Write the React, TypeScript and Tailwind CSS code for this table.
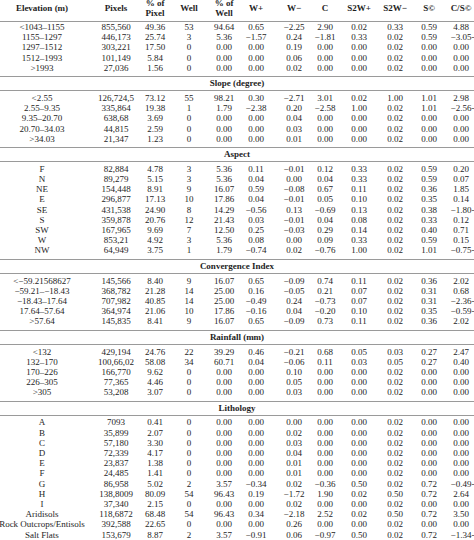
import React from "react";

const GRID =
  "grid grid-cols-[84px_64px_14px_54px_16px_48px_28px_34px_34px_38px_30px_34px]";

type Section = { title: string; rows: string[][] };

const sections: Section[] = [
  {
    title: "",
    rows: [
      ["<1043–1155", "855,560", "49.36", "53", "94.64", "0.65", "−2.25", "2.90", "0.02", "0.33", "0.59", "4.88"],
      ["1155–1297", "446,173", "25.74", "3", "5.36", "−1.57", "0.24", "−1.81", "0.33", "0.02", "0.59", "−3.05"],
      ["1297–1512", "303,221", "17.50", "0", "0.00", "0.00", "0.19", "0.00", "0.00", "0.02", "0.00", "0.00"],
      ["1512–1993", "101,149", "5.84", "0", "0.00", "0.00", "0.06", "0.00", "0.00", "0.02", "0.00", "0.00"],
      [">1993", "27,036", "1.56", "0", "0.00", "0.00", "0.02", "0.00", "0.00", "0.02", "0.00", "0.00"],
    ],
  },
  {
    title: "Slope (degree)",
    rows: [
      ["<2.55", "126,724,5", "73.12", "55", "98.21", "0.30", "−2.71", "3.01", "0.02", "1.00", "1.01", "2.98"],
      ["2.55–9.35", "335,864", "19.38", "1", "1.79", "−2.38", "0.20", "−2.58", "1.00", "0.02", "1.01", "−2.56"],
      ["9.35–20.70", "638,68", "3.69", "0", "0.00", "0.00", "0.04", "0.00", "0.00", "0.02", "0.00", "0.00"],
      ["20.70–34.03", "44,815", "2.59", "0", "0.00", "0.00", "0.03", "0.00", "0.00", "0.02", "0.00", "0.00"],
      [">34.03", "21,347", "1.23", "0", "0.00", "0.00", "0.01", "0.00", "0.00", "0.02", "0.00", "0.00"],
    ],
  },
  {
    title: "Aspect",
    rows: [
      ["F", "82,884", "4.78", "3", "5.36", "0.11", "−0.01", "0.12", "0.33", "0.02", "0.59", "0.20"],
      ["N", "89,279", "5.15", "3", "5.36", "0.04", "0.00", "0.04", "0.33", "0.02", "0.59", "0.07"],
      ["NE", "154,448", "8.91", "9", "16.07", "0.59", "−0.08", "0.67", "0.11", "0.02", "0.36", "1.85"],
      ["E", "296,877", "17.13", "10", "17.86", "0.04", "−0.01", "0.05", "0.10", "0.02", "0.35", "0.14"],
      ["SE", "431,538", "24.90", "8", "14.29", "−0.56", "0.13", "−0.69", "0.13", "0.02", "0.38", "−1.80"],
      ["S", "359,878", "20.76", "12", "21.43", "0.03", "−0.01", "0.04", "0.08", "0.02", "0.33", "0.12"],
      ["SW", "167,965", "9.69", "7", "12.50", "0.25", "−0.03", "0.29", "0.14", "0.02", "0.40", "0.71"],
      ["W", "853,21", "4.92", "3", "5.36", "0.08", "0.00", "0.09", "0.33", "0.02", "0.59", "0.15"],
      ["NW", "64,949", "3.75", "1", "1.79", "−0.74", "0.02", "−0.76", "1.00", "0.02", "1.01", "−0.75"],
    ],
  },
  {
    title: "Convergence Index",
    rows: [
      ["<−59.21568627", "145,566", "8.40", "9", "16.07", "0.65", "−0.09", "0.74", "0.11", "0.02", "0.36", "2.02"],
      ["−59.21–−18.43", "368,782", "21.28", "14", "25.00", "0.16", "−0.05", "0.21", "0.07", "0.02", "0.31", "0.68"],
      ["−18.43–17.64", "707,982", "40.85", "14", "25.00", "−0.49", "0.24", "−0.73", "0.07", "0.02", "0.31", "−2.36"],
      ["17.64–57.64", "364,974", "21.06", "10", "17.86", "−0.16", "0.04", "−0.20", "0.10", "0.02", "0.35", "−0.59"],
      [">57.64", "145,835", "8.41", "9", "16.07", "0.65", "−0.09", "0.73", "0.11", "0.02", "0.36", "2.02"],
    ],
  },
  {
    title: "Rainfall (mm)",
    rows: [
      ["<132", "429,194", "24.76", "22", "39.29", "0.46", "−0.21", "0.68", "0.05", "0.03", "0.27", "2.47"],
      ["132–170", "100,66,02", "58.08", "34", "60.71", "0.04", "−0.06", "0.11", "0.03", "0.05", "0.27", "0.40"],
      ["170–226", "166,770", "9.62", "0", "0.00", "0.00", "0.10", "0.00", "0.00", "0.02", "0.00", "0.00"],
      ["226–305", "77,365", "4.46", "0", "0.00", "0.00", "0.05", "0.00", "0.00", "0.02", "0.00", "0.00"],
      [">305", "53,208", "3.07", "0", "0.00", "0.00", "0.03", "0.00", "0.00", "0.02", "0.00", "0.00"],
    ],
  },
  {
    title: "Lithology",
    rows: [
      ["A", "7093", "0.41", "0", "0.00", "0.00", "0.00", "0.00", "0.00", "0.02", "0.00", "0.00"],
      ["B", "35,899", "2.07", "0", "0.00", "0.00", "0.02", "0.00", "0.00", "0.02", "0.00", "0.00"],
      ["C", "57,180", "3.30", "0", "0.00", "0.00", "0.03", "0.00", "0.00", "0.02", "0.00", "0.00"],
      ["D", "72,339", "4.17", "0", "0.00", "0.00", "0.04", "0.00", "0.00", "0.02", "0.00", "0.00"],
      ["E", "23,837", "1.38", "0", "0.00", "0.00", "0.01", "0.00", "0.00", "0.02", "0.00", "0.00"],
      ["F", "24,485", "1.41", "0", "0.00", "0.00", "0.01", "0.00", "0.00", "0.02", "0.00", "0.00"],
      ["G", "86,958", "5.02", "2", "3.57", "−0.34", "0.02", "−0.36", "0.50", "0.02", "0.72", "−0.49"],
      ["H", "138,8009", "80.09", "54", "96.43", "0.19", "−1.72", "1.90", "0.02", "0.50", "0.72", "2.64"],
      ["I", "37,340", "2.15", "0", "0.00", "0.00", "0.02", "0.00", "0.00", "0.02", "0.00", "0.00"],
      ["Aridisols", "118,6872", "68.48", "54", "96.43", "0.34", "−2.18", "2.52", "0.02", "0.50", "0.72", "3.50"],
      ["Rock Outcrops/Entisols", "392,588", "22.65", "0", "0.00", "0.00", "0.26", "0.00", "0.00", "0.02", "0.00", "0.00"],
      ["Salt Flats", "153,679", "8.87", "2", "3.57", "−0.91", "0.06", "−0.97", "0.50", "0.02", "0.72", "−1.34"],
    ],
  },
];

const headers: string[][] = [
  ["Elevation (m)"],
  ["Pixels"],
  ["% of", "Pixel"],
  ["Well"],
  ["% of", "Well"],
  ["W+"],
  ["W−"],
  ["C"],
  ["S2W+"],
  ["S2W−"],
  ["S©"],
  ["C/S©"],
];

function Line() {
  return <div className="h-px bg-[#9a9a9a]" />;
}

function DataRow({ row }: { row: string[] }) {
  return (
    <div className={`${GRID} h-[10.2px] leading-[10.2px]`}>
      {row.map((v, i) => (
        <div key={i} className="flex justify-center whitespace-nowrap">
          <span>
            {v}
            {i === 11 && v.startsWith("−") ? (
              <span className="inline-block w-0">-</span>
            ) : null}
          </span>
        </div>
      ))}
    </div>
  );
}

export default function App() {
  return (
    <div className="w-[474px] h-[540px] overflow-hidden bg-white">
      <div className="w-[478px] -mt-[2px] font-['Liberation_Serif','Times_New_Roman',serif] text-[9px] text-[#1e1e1e]">
        <div className={`${GRID} h-[20px] items-center font-bold leading-[10px]`}>
          {headers.map((h, i) => (
            <div key={i} className="flex flex-col items-center whitespace-nowrap">
              {h.map((t, j) => (
                <span key={j}>{t}</span>
              ))}
            </div>
          ))}
        </div>
        <div className="h-[2.5px]" />
        <Line />
        <div className="h-[0.5px]" />
        {sections.map((s, si) => (
          <div key={si}>
            {s.title ? (
              <>
                <div className="h-[3.5px]" />
                <Line />
                <div className="h-[13px] flex items-center justify-center pr-[4px] font-bold whitespace-nowrap">
                  {s.title}
                </div>
                <Line />
                <div className="h-[1.5px]" />
              </>
            ) : null}
            {s.rows.map((r, ri) => (
              <DataRow key={ri} row={r} />
            ))}
          </div>
        ))}
      </div>
    </div>
  );
}
